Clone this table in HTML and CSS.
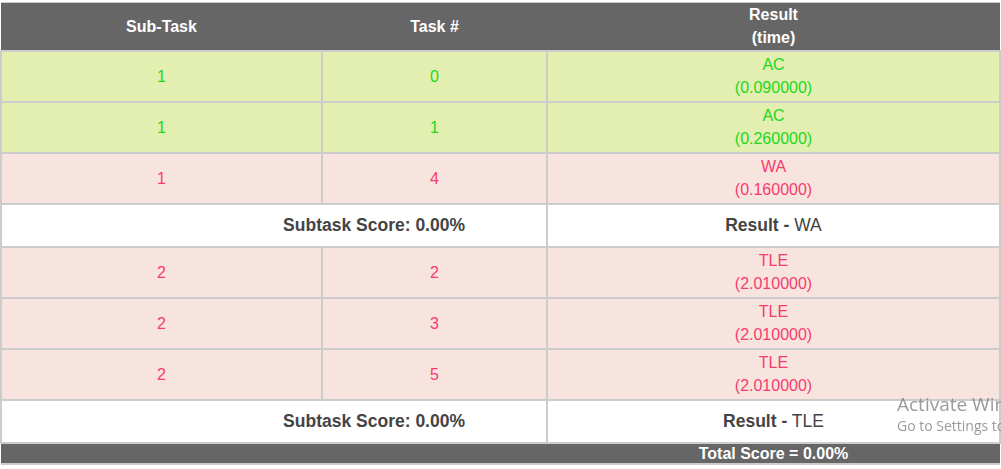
FILE: index.html
```html
<!DOCTYPE html>
<html lang="en">
<head>
    <meta charset="UTF-8">
    <title>Submission Result</title>
    <link rel="stylesheet" href="styles.css">
</head>
<body>
    <table class="result-table">
        <colgroup>
            <col class="col-sub">
            <col class="col-task">
            <col class="col-result">
        </colgroup>
        <thead>
            <tr>
                <th>Sub-Task</th>
                <th>Task #</th>
                <th>Result<br>(time)</th>
            </tr>
        </thead>
        <tbody>
            <tr class="ok">
                <td>1</td>
                <td>0</td>
                <td>AC<br>(0.090000)</td>
            </tr>
            <tr class="ok">
                <td>1</td>
                <td>1</td>
                <td>AC<br>(0.260000)</td>
            </tr>
            <tr class="fail">
                <td>1</td>
                <td>4</td>
                <td>WA<br>(0.160000)</td>
            </tr>
            <tr class="subtask">
                <td colspan="2" class="subtask-score">Subtask Score: 0.00%</td>
                <td><b>Result -</b> WA</td>
            </tr>
            <tr class="fail">
                <td>2</td>
                <td>2</td>
                <td>TLE<br>(2.010000)</td>
            </tr>
            <tr class="fail">
                <td>2</td>
                <td>3</td>
                <td>TLE<br>(2.010000)</td>
            </tr>
            <tr class="fail">
                <td>2</td>
                <td>5</td>
                <td>TLE<br>(2.010000)</td>
            </tr>
            <tr class="subtask">
                <td colspan="2" class="subtask-score">Subtask Score: 0.00%</td>
                <td><b>Result -</b> TLE</td>
            </tr>
        </tbody>
        <tfoot>
            <tr>
                <th colspan="2"></th>
                <th>Total Score = 0.00%</th>
            </tr>
        </tfoot>
    </table>

    <div class="activate">
        <div class="activate-title">Activate Windows</div>
        <div class="activate-sub">Go to Settings to activate Windows.</div>
    </div>
</body>
</html>
```

FILE: styles.css
```css
:root {
    --header: #666666;
    --border: #cccccc;
    --ok-bg: #e2efb0;
    --ok-text: #1ed81e;
    --fail-bg: #f8e4df;
    --fail-text: #f73b6c;
    --score-text: #444444;
}

body {
    font-family: "Liberation Sans", Arial, sans-serif;
    margin: 0;
    padding-top: 2px;
    background: #ffffff;
    overflow: hidden;
}

.result-table {
    width: 999px;
    border-collapse: collapse;
    table-layout: fixed;
    text-align: center;
}

.col-sub { width: 321px; }
.col-task { width: 225px; }
.col-result { width: 453px; }

.result-table th {
    background: var(--header);
    color: #ffffff;
    font-size: 16px;
    font-weight: bold;
    line-height: 23px;
    padding: 0;
}

.result-table thead th {
    padding: 0 0 1px;
    border-top: 1px solid var(--border);
}

.result-table tfoot th {
    line-height: 19px;
    border-top: 2px solid var(--border);
    border-bottom: 2px solid var(--border);
}

.result-table td {
    border: 2px solid var(--border);
    font-size: 16px;
    line-height: 23px;
    padding: 1px 0 2px;
}

.ok td {
    background: var(--ok-bg);
    color: var(--ok-text);
}

.fail td {
    background: var(--fail-bg);
    color: var(--fail-text);
}

.subtask td {
    background: #ffffff;
    color: var(--score-text);
    font-size: 17.5px;
    padding: 9px 0;
}

.subtask td.subtask-score {
    font-weight: bold;
    text-align: right;
    padding-right: 81px;
}

.activate {
    position: fixed;
    left: 897px;
    top: 391px;
    white-space: nowrap;
    font-family: "Open Sans", "Noto Sans", sans-serif;
    color: rgba(120, 120, 120, 0.75);
}

.activate-title {
    font-size: 19px;
    line-height: 26px;
}

.activate-sub {
    font-size: 14px;
    line-height: 18px;
}
```
